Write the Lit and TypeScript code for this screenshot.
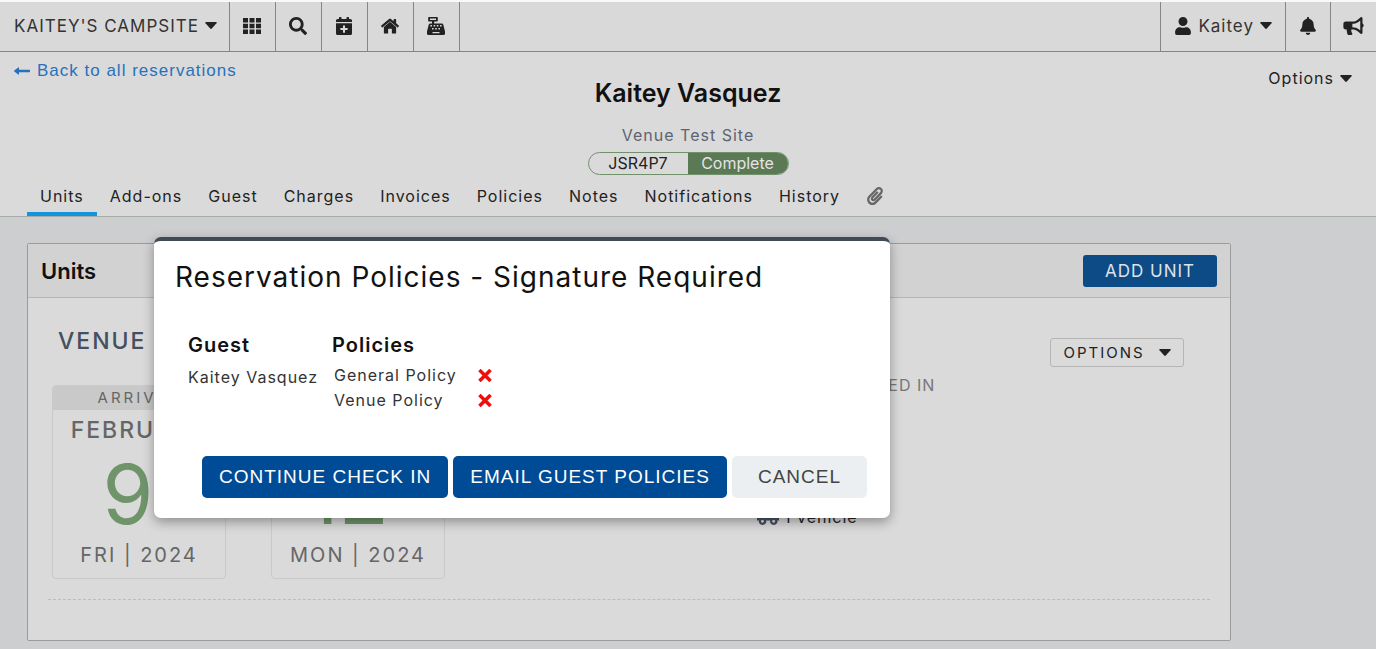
import { LitElement, html, css, svg } from "lit";
import { customElement, property } from "lit/decorators.js";

const glyphs: Record<string, { box: string; body: unknown }> = {
  caret: { box: "0 0 12 7", body: svg`<path d="M1 0h10q1.400 0 .5 1.200L6.800 6.500q-.8.800-1.600 0L.5 1.200Q-.4 0 1 0z"/>` },
  grid: {
    box: "0 0 18 16",
    body: svg`<path d="M0 0h5v4.400H0zM6.500 0h5v4.400h-5zM13 0h5v4.400h-5zM0 5.800h5v4.400H0zM6.500 5.800h5v4.400h-5zM13 5.800h5v4.400h-5zM0 11.600h5V16H0zM6.500 11.600h5V16h-5zM13 11.600h5V16h-5z"/>`,
  },
  search: {
    box: "0 0 512 512",
    body: svg`<path d="M505 442.700L405.300 343c-4.500-4.500-10.600-7-17-7H372c27.600-35.300 44-79.700 44-128C416 93.100 322.900 0 208 0S0 93.100 0 208s93.100 208 208 208c48.300 0 92.700-16.400 128-44v16.300c0 6.400 2.500 12.500 7 17l99.700 99.700c9.400 9.400 24.600 9.400 33.900 0l28.300-28.300c9.400-9.400 9.400-24.600.1-34zM208 336c-70.700 0-128-57.200-128-128 0-70.700 57.200-128 128-128 70.700 0 128 57.200 128 128 0 70.700-57.200 128-128 128z"/>`,
  },
  calendar: {
    box: "0 0 16 18",
    body: svg`<path fill-rule="evenodd" d="M3 .6Q3 0 3.600 0h1.300q.6 0 .6.600V2h5V.6q0-.6.6-.6h1.300q.6 0 .6.600V2h1.400Q16 2 16 3.600V5H0V3.600Q0 2 1.600 2H3zM0 6.200h16v10.200q0 1.600-1.600 1.600H1.600Q0 18 0 16.400zM7 8.500v2.600H4.400v2H7v2.600h2v-2.600h2.600v-2H9V8.500z"/>`,
  },
  home: {
    box: "0 0 20 17",
    body: svg`<path d="M10 3.900l6.800 5.700v6.600q0 .7-.7.700h-4v-4.600q0-.7-.7-.7H8.600q-.7 0-.7.700v4.600h-4q-.7 0-.7-.7V9.600z"/><path d="M9 .6q1-.8 2 0l3 2.500V1.300q0-.5.5-.5h1.800q.5 0 .5.500v4.200L19.700 8q.5.400.1.900l-.8 1q-.4.400-.9 0L10 3.100 1.900 9.900q-.5.400-.9 0l-.8-1Q-.2 8.400.3 8z"/>`,
  },
  register: {
    box: "0 0 18 18",
    body: svg`<path fill-rule="evenodd" d="M1.800 0h8.400q.6 0 .6.600v3.200q0 .6-.6.600H7.200v2h7.500q1.300 0 1.600 1.300l1.600 6.300q.1.400.1.900v1.500q0 1.600-1.600 1.600H1.600Q0 18 0 16.400v-1.500q0-.5.100-.9l1.600-6.300Q2 6.400 3.300 6.400H5v-2H1.800q-.6 0-.6-.6V.6q0-.6.600-.6zM3 1.500v1.400h6V1.500zM3.400 8v1.600H5V8zm3.200 0v1.600h1.600V8zm3.200 0v1.600h1.600V8zM13 8v1.600h1.600V8zM5 11v1.600h1.600V11zm3.200 0v1.600h1.600V11zm3.200 0v1.600H13V11zM5.500 15v1.200h7V15z"/>`,
  },
  user: {
    box: "0 0 448 512",
    body: svg`<path d="M224 256c70.700 0 128-57.300 128-128S294.700 0 224 0 96 57.300 96 128s57.300 128 128 128zm89.600 32h-16.700c-22.200 10.200-46.900 16-72.900 16s-50.600-5.800-72.900-16h-16.700C60.200 288 0 348.200 0 422.400V464c0 26.500 21.500 48 48 48h352c26.500 0 48-21.500 48-48v-41.600c0-74.200-60.200-134.400-134.400-134.400z"/>`,
  },
  bell: {
    box: "0 0 448 512",
    body: svg`<path d="M224 512c35.320 0 63.970-28.650 63.970-64H160.030c0 35.350 28.650 64 63.970 64zm215.390-149.710c-19.320-20.760-55.470-51.990-55.470-154.290 0-77.700-54.480-139.900-127.940-155.160V32c0-17.670-14.320-32-31.980-32s-31.980 14.330-31.980 32v20.840C118.560 68.100 64.080 130.300 64.080 208c0 102.300-36.150 133.530-55.470 154.290-6 6.450-8.660 14.160-8.610 21.710.11 16.400 12.980 32 32.100 32h383.800c19.120 0 32-15.600 32.100-32 .05-7.550-2.610-15.270-8.610-21.710z"/>`,
  },
  bullhorn: {
    box: "0 0 576 512",
    body: svg`<path d="M576 240c0-23.630-12.950-44.040-32-55.120V32.010C544 23.260 537.020 0 512 0c-7.120 0-14.190 2.380-19.980 7.020l-85.030 68.030C364.280 109.190 310.660 128 256 128H64c-35.350 0-64 28.650-64 64v96c0 35.350 28.650 64 64 64h33.700c-1.390 10.480-2.180 21.140-2.180 32 0 39.770 9.260 77.350 25.560 110.940 5.190 10.690 16.520 17.060 28.400 17.060h74.280c26.050 0 41.690-29.840 25.900-50.560-16.400-21.520-26.150-48.360-26.150-77.440 0-11.110 1.620-21.790 4.410-32H256c54.660 0 108.280 18.810 150.980 52.950l85.030 68.030a32.023 32.023 0 0 0 19.980 7.020c24.920 0 32-22.780 32-32V295.130C563.050 284.040 576 263.630 576 240zm-96 141.420l-33.050-26.440C392.950 311.780 325.120 288 256 288v-96c69.120 0 136.950-23.780 190.950-66.980L480 98.580v282.840z"/>`,
  },
  arrow: { box: "0 0 16 8", body: svg`<path d="M4.200.5q.8-.6.800.4v1.800h10.400q.6 0 .6.600v1.400q0 .6-.6.600H5v1.800q0 1-.8.400L.3 4.500q-.5-.5 0-1z"/>` },
  clip: {
    box: "0 0 448 512",
    body: svg`<path d="M43.246 466.142c-58.430-60.289-57.341-157.511 1.386-217.581L254.392 34c44.316-45.332 116.351-45.336 160.671 0 43.890 44.894 43.943 117.329 0 162.276L232.214 383.128c-29.855 30.537-78.633 30.111-107.982-.998-28.275-29.970-27.368-77.473 1.452-106.953l143.743-146.835c6.182-6.314 16.312-6.422 22.626-.241l22.861 22.379c6.315 6.182 6.422 16.312.241 22.626L171.427 319.927c-4.932 5.045-5.236 13.428-.648 18.292 4.372 4.634 11.245 4.711 15.688.165l182.849-186.851c19.613-20.062 19.613-52.725-.011-72.798-19.189-19.627-49.957-19.637-69.154 0L90.390 293.295c-34.763 35.560-35.299 93.120-1.191 128.313 34.010 35.093 88.985 35.137 123.058.286l172.060-175.999c6.177-6.319 16.307-6.433 22.626-.256l22.877 22.364c6.319 6.177 6.434 16.307.256 22.626l-172.060 175.998c-59.576 60.938-155.943 60.216-214.770-.485z"/>`,
  },
  cross: { box: "0 0 12 12", body: svg`<path d="M2 2l8 8M10 2l-8 8" stroke="currentColor" stroke-width="3.200" stroke-linecap="square"/>` },
  truck: {
    box: "0 0 22 16",
    body: svg`<path fill-rule="evenodd" d="M3 5V1.500Q3 0 4.500 0h8q1 0 1.600.8L17.500 5H20q2 0 2 2v4.500h-1.600a3.800 3.800 0 0 0-7.200 0H9.200a3.800 3.800 0 0 0-7.200 0H0V7q0-2 2-2zm2.500 0H8V2.500H5.500zM10 5h4.500l-2.200-2.500H10z"/><path fill-rule="evenodd" d="M5.500 8.600a3.700 3.700 0 1 0 .1 0zm0 2.200a1.500 1.500 0 1 1-.1 0zM16.700 8.600a3.700 3.700 0 1 0 .1 0zm0 2.200a1.500 1.500 0 1 1-.1 0z"/>`,
  },
};

@customElement("ui-icon")
class UiIcon extends LitElement {
  @property() name = "caret";
  static styles = css`
    :host { display: inline-flex; width: 18px; height: 18px; flex: none; }
    .icon { width: 100%; height: 100%; fill: currentColor; display: block; }
  `;
  render() {
    const g = glyphs[this.name];
    return html`<svg class="icon" viewBox=${g.box} aria-hidden="true">${g.body}</svg>`;
  }
}

@customElement("date-card")
class DateCard extends LitElement {
  @property() label = "";
  @property() month = "";
  @property() day = "";
  @property() foot = "";
  static styles = css`
    :host {
      display: block; box-sizing: border-box; width: 174px; border: 1px solid #c9c9c9; border-radius: 4px;
      text-align: center; text-transform: uppercase; color: #666; overflow: hidden;
    }
    .label { background: #c9c9c9; font-size: 15px; line-height: 24px; letter-spacing: 3px; }
    .month { font-size: 23px; line-height: 40px; font-weight: 500; letter-spacing: 2px; }
    .day { font-size: 82px; line-height: 90px; color: #6f946a; font-weight: 400; letter-spacing: 0; padding-right: 22px; }
    .foot { font-size: 20px; line-height: 30px; letter-spacing: 2px; padding-bottom: 8px; }
  `;
  render() {
    return html`
      <div class="label">${this.label}</div>
      <div class="month">${this.month}</div>
      <div class="day">${this.day}</div>
      <div class="foot">${this.foot}</div>
    `;
  }
}

const tabs = ["Units", "Add-ons", "Guest", "Charges", "Invoices", "Policies", "Notes", "Notifications", "History"];
const shortcuts = [
  ["grid", "All apps"],
  ["search", "Search"],
  ["calendar", "New reservation"],
  ["home", "Home"],
  ["register", "Point of sale"],
];
const policies = ["General Policy", "Venue Policy"];

@customElement("app-root")
class AppRoot extends LitElement {
  static styles = css`
    :host {
      display: block; position: relative; min-height: 100vh; box-sizing: border-box; overflow: hidden;
      background: #cdced0; color: #222; font: 16px/24px Inter, "Noto Sans", sans-serif; letter-spacing: 1px;
    }
    button { font: inherit; color: inherit; background: none; border: 0; margin: 0; padding: 0; letter-spacing: inherit; }
    a { color: inherit; text-decoration: none; }
    h1, h2, h3 { margin: 0; }
    .caret { width: 12px; height: 7px; }

    .topbar {
      display: flex; background: #d9d9d9; border-top: 2px solid #f8f8f8; border-bottom: 1px solid #858585;
      height: 49px; font-size: 17px;
    }
    .topbar button { display: flex; align-items: center; justify-content: center; gap: 6px; padding-bottom: 2px; }
    .topbar .site { padding-left: 14px; padding-right: 12px; border-right: 1px solid #858585; text-transform: uppercase; color: #333; }
    .topbar .tool { box-sizing: border-box; width: 46px; border-right: 1px solid #858585; }
    .spacer { flex: 1; }
    .topbar .end { border-left: 1px solid #858585; padding-left: 13px; padding-right: 13px; color: #333; }
    .topbar ui-icon { color: #222; }
    .topbar .horn { padding-left: 12px; padding-right: 12px; }
    .horn ui-icon { width: 21px; }

    .head { background: #dadada; border-bottom: 1px solid #a9abab; }
    .summary { display: grid; grid-template-columns: 1fr auto 1fr; padding: 7px 24px 0 14px; }
    .back {
      color: #2671bd; font-family: "Liberation Sans", Arial, sans-serif; font-size: 17px;
      justify-self: start; display: inline-flex; align-items: center; gap: 7px; align-self: start;
    }
    .back ui-icon { width: 16px; height: 8px; }
    .who { text-align: center; padding: 17px 0 3px 10px; }
    .name { font-size: 25px; line-height: 34px; font-weight: 600; color: #111; letter-spacing: 0; }
    .venue { color: #5b6472; line-height: 24px; margin-top: 13px; }
    .pill {
      display: inline-flex; margin-top: 5px; border: 1px solid #71916d; border-radius: 12px; overflow: hidden;
      font-size: 16px; line-height: 21px; vertical-align: top; letter-spacing: 0;
    }
    .code { width: 99px; }
    .state { width: 100px; background: #5b7955; color: #e4e4e4; }
    .more { justify-self: end; align-self: start; display: flex; align-items: center; gap: 6px; padding-top: 7px; }

    .tabs { display: flex; padding: 0 27px; }
    .tab { padding: 6px 13px 4px; line-height: 24px; border-bottom: 4px solid transparent; }
    .tab.on { border-color: #1296db; }
    .tab.file { color: #666; display: flex; align-items: center; }

    .panel { margin: 26px 145px 8px 27px; border: 1px solid #9a9b9d; border-radius: 2px; background: #dadada; }
    .panelhead {
      display: flex; align-items: center; justify-content: space-between; padding: 11px 13px 10px; background: #d2d2d2;
      border-bottom: 1px solid #b5b5b5;
    }
    .panelhead h2 { font-size: 22px; line-height: 28px; font-weight: 600; color: #111; letter-spacing: 0; }
    .panelhead .add { background: #0d4b87; color: #dfe3e8; border-radius: 3px; width: 134px; font-size: 17px; line-height: 32px; text-transform: uppercase; }
    .unit { margin: 0 20px 40px; padding: 29px 4px 20px; border-bottom: 1px dashed #bcbcbc; }
    .unithead { display: flex; justify-content: space-between; align-items: flex-start; padding: 0 22px 0 6px; }
    .unithead h3 { font-size: 23px; line-height: 28px; font-weight: 500; color: #44505f; letter-spacing: 2px; text-transform: uppercase; }
    .unithead .menu {
      display: flex; align-items: center; justify-content: center; gap: 14px; box-sizing: border-box; width: 134px; height: 29px;
      border: 1px solid #b5b5b5; border-radius: 3px; font-size: 15px; letter-spacing: 2px; margin-top: 11px; text-transform: uppercase;
    }
    .details { display: flex; align-items: flex-start; gap: 45px; margin-top: 18px; }
    .facts { margin-left: 267px; display: flex; flex-direction: column; justify-content: space-between; height: 144px; }
    .checked { color: #777; line-height: 24px; margin-top: -12px; padding-left: 28px; text-transform: uppercase; }
    .vehicle { display: flex; align-items: center; gap: 5px; line-height: 24px; }
    .vehicle ui-icon { width: 22px; height: 16px; color: #44505f; }

    .modal {
      position: absolute; left: 154px; top: 237px; width: 736px; box-sizing: border-box; background: #fff; color: #333;
      border-top: 4px solid #414b58; border-radius: 7px; box-shadow: 0 4px 12px rgba(0, 0, 0, 0.35);
      padding: 16px 23px 20px 21px;
    }
    .modal h2 { font-size: 28px; line-height: 40px; font-weight: 400; color: #111; }
    table { border-collapse: collapse; margin: 35px 0 0 13px; }
    th, td { padding: 0; text-align: left; vertical-align: top; font-weight: 400; }
    th { font-size: 20px; line-height: 26px; font-weight: 600; color: #111; }
    .guest { width: 144px; }
    td { line-height: 25px; }
    .person { padding-top: 7px; }
    .list { padding: 5px 0 0 2px; }
    .policy { display: grid; grid-template-columns: 144px 14px; align-items: center; }
    .policy ui-icon { width: 14px; height: 13px; color: #f20d0d; }
    .actions { display: flex; justify-content: flex-end; gap: 5px; margin-top: 43px; }
    .actions button {
      font-family: "Liberation Sans", Arial, sans-serif; font-size: 19px; line-height: 42px; border-radius: 5px;
      background: #004b96; color: #fff; padding: 0 17px; text-transform: uppercase;
    }
    .actions .cancel { background: #eceff1; color: #444; padding: 0 26px; }
  `;

  render() {
    return html`
      <header class="topbar">
        <button class="site">Kaitey's Campsite <ui-icon class="caret"></ui-icon></button>
        ${shortcuts.map(([icon, label]) => html`<button class="tool" aria-label=${label}><ui-icon name=${icon}></ui-icon></button>`)}
        <div class="spacer"></div>
        <button class="end"><ui-icon name="user"></ui-icon>Kaitey <ui-icon class="caret"></ui-icon></button>
        <button class="end" aria-label="Notices"><ui-icon name="bell"></ui-icon></button>
        <button class="end horn" aria-label="News"><ui-icon name="bullhorn"></ui-icon></button>
      </header>
      <section class="head">
        <div class="summary">
          <a class="back" href="#"><ui-icon name="arrow"></ui-icon>Back to all reservations</a>
          <div class="who">
            <h1 class="name">Kaitey Vasquez</h1>
            <div class="venue">Venue Test Site</div>
            <div class="pill"><span class="code">JSR4P7</span><span class="state">Complete</span></div>
          </div>
          <button class="more">Options <ui-icon class="caret"></ui-icon></button>
        </div>
        <nav class="tabs">
          ${tabs.map((t, i) => html`<a class="tab ${i === 0 ? "on" : ""}" href="#">${t}</a>`)}
          <a class="tab file" href="#" aria-label="Files"><ui-icon name="clip"></ui-icon></a>
        </nav>
      </section>
      <main class="panel">
        <div class="panelhead"><h2>Units</h2><button class="add">Add Unit</button></div>
        <section class="unit">
          <div class="unithead">
            <h3>Venue</h3>
            <button class="menu">Options <ui-icon class="caret"></ui-icon></button>
          </div>
          <div class="details">
            <date-card label="Arrival" month="February" day="9" foot="Fri | 2024"></date-card>
            <date-card label="Departure" month="February" day="12" foot="Mon | 2024"></date-card>
            <div class="facts">
              <div class="checked">Not checked in</div>
              <div class="vehicle"><ui-icon name="truck"></ui-icon>1 vehicle</div>
            </div>
          </div>
        </section>
      </main>
      <section class="modal" role="dialog" aria-labelledby="title">
        <h2 id="title">Reservation Policies - Signature Required</h2>
        <table>
          <tr><th class="guest">Guest</th><th>Policies</th></tr>
          <tr>
            <td class="person">Kaitey Vasquez</td>
            <td class="list">
              ${policies.map((p) => html`<div class="policy">${p}<ui-icon name="cross"></ui-icon></div>`)}
            </td>
          </tr>
        </table>
        <div class="actions">
          <button>Continue check in</button>
          <button>Email guest policies</button>
          <button class="cancel">Cancel</button>
        </div>
      </section>
    `;
  }
}
